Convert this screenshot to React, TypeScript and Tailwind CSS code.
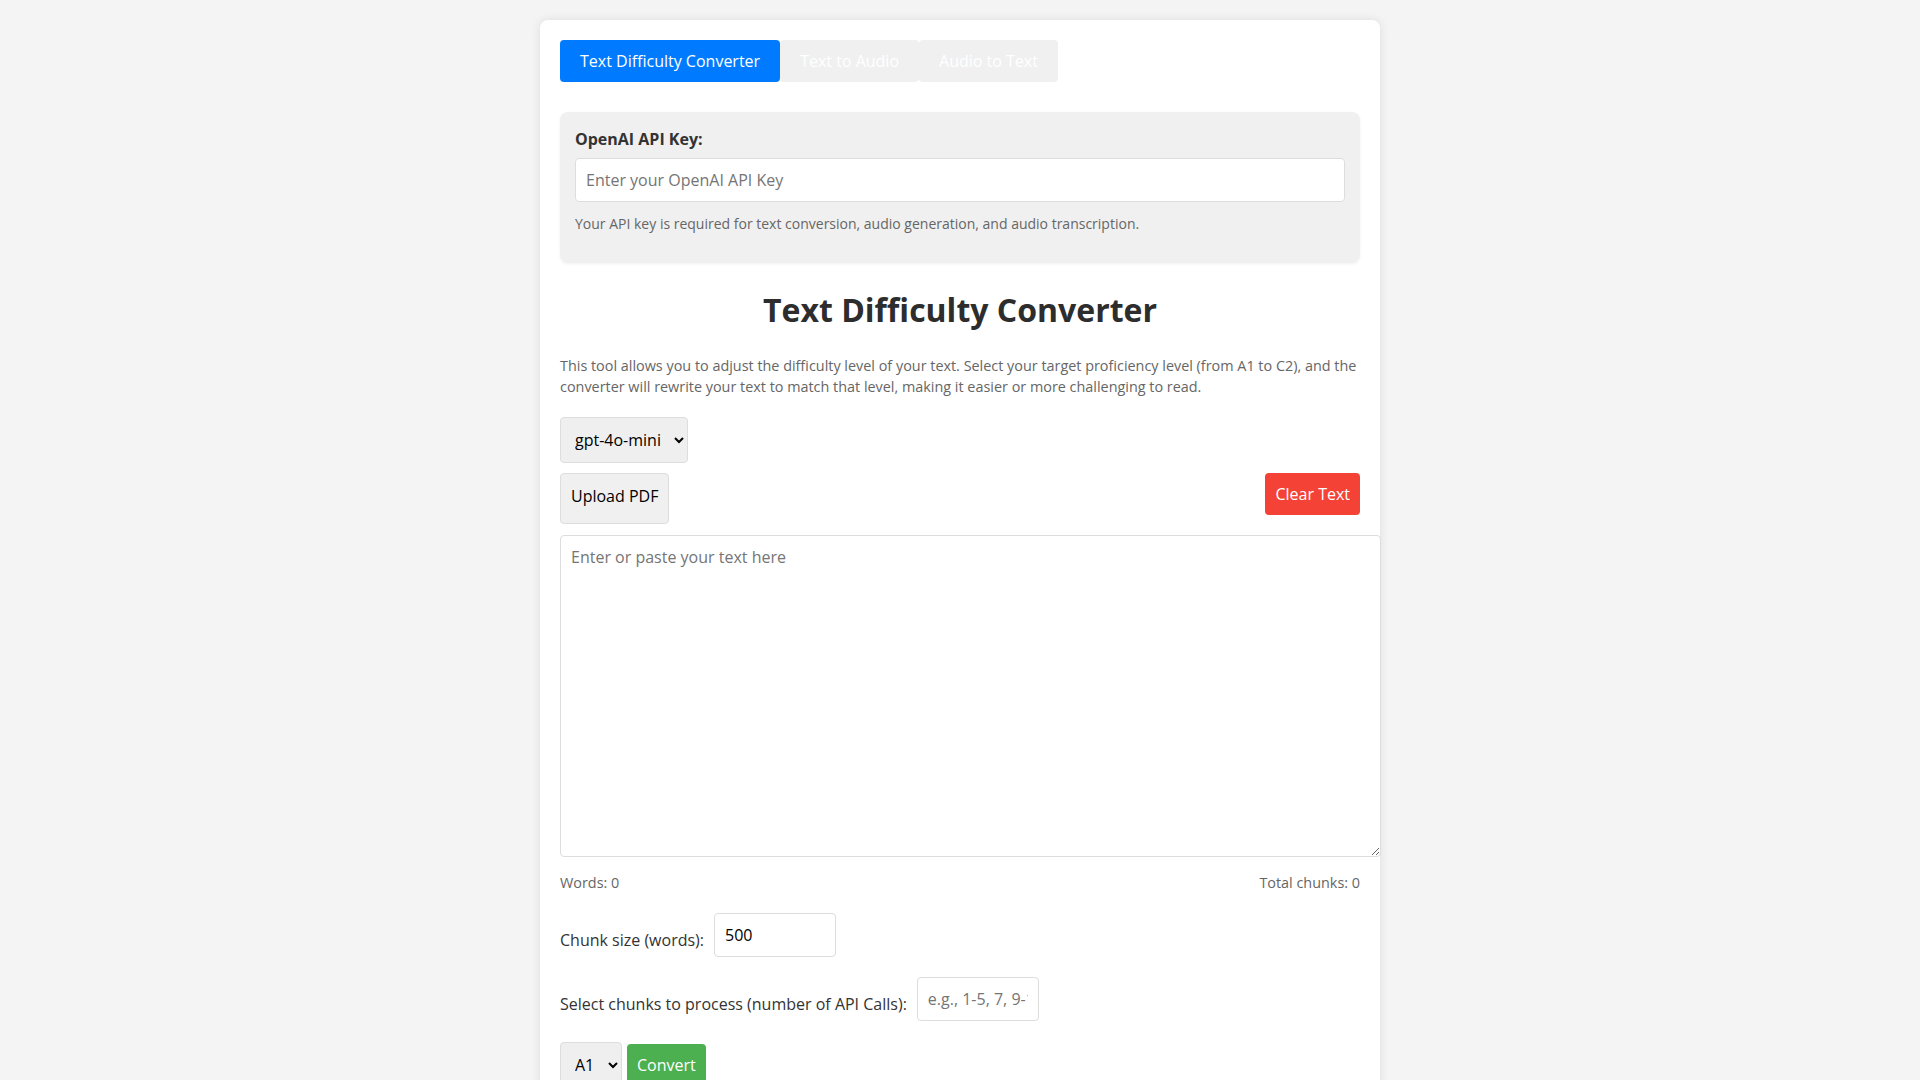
import { useState } from "react";

export default function App() {
  const [tab, setTab] = useState("convert");
  const [text, setText] = useState("");
  const [chunkSize, setChunkSize] = useState("500");

  const words = text.trim() ? text.trim().split(/\s+/).length : 0;
  const size = parseInt(chunkSize) || 0;
  const chunks = words && size ? Math.ceil(words / size) : 0;

  const tabs = [
    { id: "convert", label: "Text Difficulty Converter" },
    { id: "tts", label: "Text to Audio" },
    { id: "stt", label: "Audio to Text" },
  ];

  return (
    <div className="min-h-screen bg-[#f4f4f4] pt-[20px] pb-[20px] font-['Open_Sans',sans-serif] text-[#333]">
      <div className="mx-auto box-content w-[800px] rounded-[8px] bg-white p-[20px] shadow-[0_0_10px_rgba(0,0,0,0.1)]">
        <div className="flex">
          {tabs.map((t) => (
            <button
              key={t.id}
              onClick={() => setTab(t.id)}
              className={
                tab === t.id
                  ? "rounded-[4px] bg-[#007bff] px-[20px] py-[10px] text-[16px] leading-[22px] text-white"
                  : "rounded-[4px] bg-[#f0f0f0] px-[20px] py-[10px] text-[16px] leading-[22px] text-white"
              }
            >
              {t.label}
            </button>
          ))}
        </div>

        <div className="mt-[30px] rounded-[8px] bg-[#f0f0f0] p-[15px] shadow-[0_1px_3px_rgba(0,0,0,0.06)]">
          <label className="mb-[7px] block text-[16px] leading-[24px] font-bold">
            OpenAI API Key:
          </label>
          <input
            type="password"
            placeholder="Enter your OpenAI API Key"
            className="block w-full rounded-[4px] border border-[#ddd] bg-white px-[10px] py-[10px] text-[16px] leading-[22px] placeholder:text-[#757575] focus:outline-none"
          />
          <p className="mt-[12px] mb-[15px] text-[14px] leading-[19px] text-[#666]">
            Your API key is required for text conversion, audio generation, and audio transcription.
          </p>
        </div>

        <h1 className="mt-[25px] text-center text-[32px] leading-[44px] font-bold text-[#2d2d2d]">
          Text Difficulty Converter
        </h1>
        <p className="mt-[23px] text-[14.4px] leading-[21px] text-[#666]">
          This tool allows you to adjust the difficulty level of your text. Select your target
          proficiency level (from A1 to C2), and the converter will rewrite your text to match that
          level, making it easier or more challenging to read.
        </p>

        <div className="mt-[20px]">
          <select className="h-[46px] rounded-[4px] border border-[#ddd] bg-[#efefef] px-[10px] text-[16px] leading-[24px] text-black">
            <option>gpt-4o-mini</option>
            <option>gpt-4o</option>
          </select>
        </div>

        <div className="mt-[10px] flex items-start justify-between">
          <label className="block h-[51px] cursor-pointer rounded-[4px] border border-[#ddd] bg-[#f0f0f0] px-[10px] pt-[10px] text-[16px] leading-[24px] text-black">
            Upload PDF
          </label>
          <button
            onClick={() => setText("")}
            className="rounded-[4px] bg-[#f44336] px-[10px] py-[10px] text-[16px] leading-[22px] text-white"
          >
            Clear Text
          </button>
        </div>

        <textarea
          value={text}
          onChange={(e) => setText(e.target.value)}
          placeholder="Enter or paste your text here"
          className="mt-[11px] block h-[322px] w-[821px] rounded-[4px] border border-[#ddd] p-[10px] text-[16px] leading-[22px] placeholder:text-[#757575] focus:outline-none"
        />

        <div className="mt-[15px] flex justify-between text-[14.4px] leading-[21px] text-[#666]">
          <span>Words: {words}</span>
          <span>Total chunks: {chunks}</span>
        </div>

        <div className="mt-[20px] flex items-center">
          <label className="mt-[9px] text-[16px] leading-[24px]">Chunk size (words):</label>
          <input
            value={chunkSize}
            onChange={(e) => setChunkSize(e.target.value)}
            className="ml-[10px] h-[44px] w-[122px] rounded-[4px] border border-[#ddd] px-[10px] text-[16px] text-black focus:outline-none"
          />
        </div>

        <div className="mt-[20px] flex items-center">
          <label className="mt-[9px] text-[16px] leading-[24px]">
            Select chunks to process (number of API Calls):
          </label>
          <input
            placeholder="e.g., 1-5, 7, 9-12"
            className="ml-[10px] h-[44px] w-[122px] rounded-[4px] border border-[#ddd] px-[10px] text-[16px] placeholder:text-[#757575] focus:outline-none"
          />
        </div>

        <div className="mt-[21px] flex items-center gap-[5px]">
          <select className="h-[46px] rounded-[4px] border border-[#ddd] bg-[#efefef] px-[10px] text-[16px] leading-[24px] text-black">
            <option>A1</option>
            <option>A2</option>
            <option>B1</option>
            <option>B2</option>
            <option>C1</option>
            <option>C2</option>
          </select>
          <button className="rounded-[4px] bg-[#4caf50] px-[10px] py-[10px] text-[16px] leading-[22px] text-white">
            Convert
          </button>
        </div>
      </div>
    </div>
  );
}
